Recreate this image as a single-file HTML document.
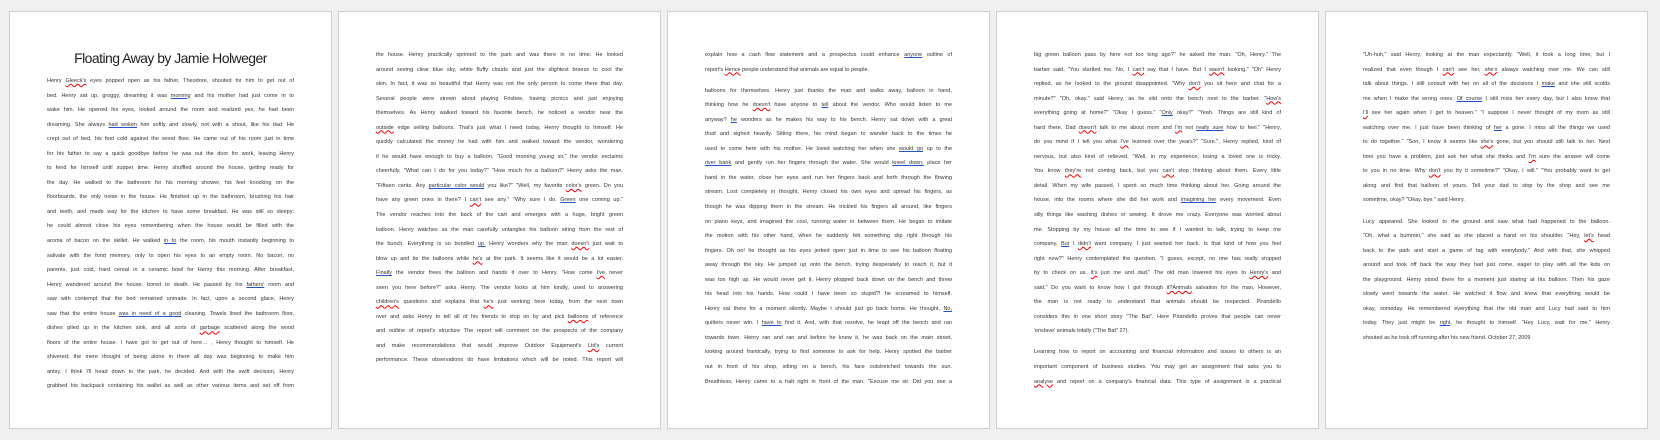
<!DOCTYPE html>
<html><head><meta charset="utf-8"><style>
html,body{margin:0;padding:0;background:#efefef;width:1660px;height:440px;overflow:hidden}
.pg{position:absolute;top:11px;width:321px;height:416px;background:#fff;border:1px solid #cfcfcf}
.tx{position:absolute;left:37px;top:36px;width:247px;font-family:"Liberation Sans",Arial,sans-serif;font-size:5.5px;color:#333}
.l{height:14.55px;line-height:14.55px;overflow:hidden;text-align:justify;text-align-last:justify}
.e{text-align-last:left}
.gap{height:6.5px}
.t{position:absolute;left:0;width:100%;top:36px;text-align:center;font-family:"Liberation Sans",Arial,sans-serif;font-size:14px;letter-spacing:-0.55px;color:#222;line-height:20px}
.r{text-decoration:underline wavy #e00;text-decoration-thickness:0.6px}
.b{text-decoration:underline #2255cc;text-decoration-thickness:0.8px}
</style></head><body>

<div class="pg" style="left:9px">
<div class="t">Floating Away by Jamie Holweger</div>
<div class="tx" style="top:62px">
<div class="l">Henry <span class="r">Gleeck's</span> eyes popped open as his father, Theodore, shouted for him to get out of</div>
<div class="l">bed. Henry sat up, groggy, dreaming it was <span class="b">morning</span> and his mother had just come in to</div>
<div class="l">wake him. He opened his eyes, looked around the room and realized yes, he had been</div>
<div class="l">dreaming. She always <span class="b">had woken</span> him softly and slowly, not with a shout, like his dad. He</div>
<div class="l">crept out of bed, his feet cold against the wood floor. He came out of his room just in time</div>
<div class="l">for his father to say a quick goodbye before he was out the door for work, leaving Henry</div>
<div class="l">to fend for himself until supper time. Henry shuffled around the house, getting ready for</div>
<div class="l">the day. He walked to the bathroom for his morning shower, his feet knocking on the</div>
<div class="l">floorboards, the only noise in the house. He finished up in the bathroom, brushing his hair</div>
<div class="l">and teeth, and made way for the kitchen to have some breakfast. He was still so sleepy;</div>
<div class="l">he could almost close his eyes remembering when the house would be filled with the</div>
<div class="l">aroma of bacon on the skillet. He walked <span class="b">in to</span> the room, his mouth instantly beginning to</div>
<div class="l">salivate with the fond memory, only to open his eyes to an empty room. No bacon, no</div>
<div class="l">parents, just cold, hard cereal in a ceramic bowl for Henry this morning. After breakfast,</div>
<div class="l">Henry wandered around the house, bored to death. He passed by his <span class="b">fathers'</span> room and</div>
<div class="l">saw with contempt that the bed remained unmade. In fact, upon a second glace, Henry</div>
<div class="l">saw that the entire house <span class="b">was in need of a good</span> cleaning. Towels lined the bathroom floor,</div>
<div class="l">dishes piled up in the kitchen sink, and all sorts of <span class="r">garbage</span> scattered along the wood</div>
<div class="l">floors of the entire house. I have got to get out of here… , Henry thought to himself. He</div>
<div class="l">shivered; the mere thought of being alone in there all day was beginning to make him</div>
<div class="l">antsy. I think I'll head down to the park, he decided. And with the swift decision, Henry</div>
<div class="l">grabbed his backpack containing his wallet as well as other various items and set off from</div>
</div></div>

<div class="pg" style="left:338px"><div class="tx">
<div class="l">the house. Henry practically sprinted to the park and was there in no time. He looked</div>
<div class="l">around seeing clear blue sky, white fluffy clouds and just the slightest breeze to cool the</div>
<div class="l">skin. In fact, it was so beautiful that Henry was not the only person to come there that day.</div>
<div class="l">Several people were strewn about playing Frisbee, having picnics and just enjoying</div>
<div class="l">themselves. As Henry walked toward his favorite bench, he noticed a vendor near the</div>
<div class="l"><span class="r">outside</span> edge selling balloons. That's just what I need today, Henry thought to himself. He</div>
<div class="l">quickly calculated the money he had with him and walked toward the vendor, wondering</div>
<div class="l">if he would have enough to buy a balloon. "Good morning young sir," the vendor exclaims</div>
<div class="l">cheerfully, "What can I do for you today?" "How much for a balloon?" Henry asks the man.</div>
<div class="l">"Fifteen cents. Any <span class="b">particular color would</span> you like?" "Well, my favorite <span class="r">color's</span> green. Do you</div>
<div class="l">have any green ones in there? I <span class="r">can't</span> see any." "Why sure I do. <span class="b">Green</span> one coming up."</div>
<div class="l">The vendor reaches into the back of the cart and emerges with a huge, bright green</div>
<div class="l">balloon. Henry watches as the man carefully untangles his balloon string from the rest of</div>
<div class="l">the bunch. Everything is so bundled <span class="b">up.</span> Henry wonders why the man <span class="r">doesn't</span> just wait to</div>
<div class="l">blow up and tie the balloons while <span class="r">he's</span> at the park. It seems like it would be a lot easier.</div>
<div class="l"><span class="b">Finally</span> the vendor frees the balloon and hands it over to Henry. "How come <span class="r">I've</span> never</div>
<div class="l">seen you here before?" asks Henry. The vendor looks at him kindly, used to answering</div>
<div class="l"><span class="r">children's</span> questions and explains that <span class="r">he's</span> just working here today, from the next town</div>
<div class="l">over and asks Henry to tell all of his friends to stop on by and pick <span class="r">balloons</span> of reference</div>
<div class="l">and outline of report's structure The report will comment on the prospects of the company</div>
<div class="l">and make recommendations that would improve Outdoor Equipment's <span class="r">Ltd's</span> current</div>
<div class="l">performance. These observations do have limitations which will be noted. This report will</div>
</div></div>

<div class="pg" style="left:667px"><div class="tx">
<div class="l">explain how a cash flow statement and a prospectus could enhance <span class="b">anyone</span> outline of</div>
<div class="l e">report's <span class="r">Hence</span> people understand that animals are equal to people.</div>
<div class="gap"></div>
<div class="l">balloons for themselves. Henry just thanks the man and walks away, balloon in hand,</div>
<div class="l">thinking how he <span class="r">doesn't</span> have anyone to <span class="b">tell</span> about the vendor. Who would listen to me</div>
<div class="l">anyway? <span class="b">he</span> wonders as he makes his way to his bench. Henry sat down with a great</div>
<div class="l">thud and sighed heavily. Sitting there, his mind began to wander back to the times he</div>
<div class="l">used to come here with his mother. He loved watching her when she <span class="b">would go</span> up to the</div>
<div class="l"><span class="b">river bank</span> and gently run her fingers through the water. She would <span class="b">kneel down,</span> place her</div>
<div class="l">hand in the water, close her eyes and run her fingers back and forth through the flowing</div>
<div class="l">stream. Lost completely in thought, Henry closed his own eyes and spread his fingers, as</div>
<div class="l">though he was dipping them in the stream. He trickled his fingers all around, like fingers</div>
<div class="l">on piano keys, and imagined the cool, running water in between them. He began to imitate</div>
<div class="l">the motion with his other hand, when he suddenly felt something slip right through his</div>
<div class="l">fingers. Oh no! he thought as his eyes jerked open just in time to see his balloon floating</div>
<div class="l">away through the sky. He jumped up onto the bench, trying desperately to reach it, but it</div>
<div class="l">was too high up. He would never get it. Henry plopped back down on the bench and threw</div>
<div class="l">his head into his hands. How could I have been so stupid?! he screamed to himself.</div>
<div class="l">Henry sat there for a moment silently. Maybe I should just go back home. He thought, <span class="b">No,</span></div>
<div class="l">quitters never win. I <span class="b">have to</span> find it. And, with that resolve, he leapt off the bench and ran</div>
<div class="l">towards town. Henry ran and ran and before he knew it, he was back on the main street,</div>
<div class="l">looking around frantically, trying to find someone to ask for help. Henry spotted the barber</div>
<div class="l">out in front of his shop, sitting on a bench, his face outstretched towards the sun.</div>
<div class="l">Breathless, Henry came to a halt right in front of the man. "Excuse me sir. Did you see a</div>
</div></div>

<div class="pg" style="left:996px"><div class="tx">
<div class="l">big green balloon pass by here not too long ago?" he asked the man. "Oh, Henry." The</div>
<div class="l">barber said, "You startled me. No, I <span class="r">can't</span> say that I have. But I <span class="r">wasn't</span> looking." "Oh" Henry</div>
<div class="l">replied, as he looked to the ground disappointed. "Why <span class="r">don't</span> you sit here and chat for a</div>
<div class="l">minute?" "Oh, okay." said Henry, as he slid onto the bench next to the barber. "<span class="r">How's</span></div>
<div class="l">everything going at home?" "Okay I guess." "<span class="b">Only</span> okay?" "Yeah. Things are still kind of</div>
<div class="l">hard there. Dad <span class="r">doesn't</span> talk to me about mom and <span class="r">I'm</span> not <span class="b">really sure</span> how to feel." "Henry,</div>
<div class="l">do you mind if I tell you what <span class="r">I've</span> learned over the years?" "Sure.", Henry replied, kind of</div>
<div class="l">nervous, but also kind of relieved. "Well, in my experience, losing a loved one is tricky.</div>
<div class="l">You know <span class="r">they're</span> not coming back, but you <span class="r">can't</span> stop thinking about them. Every little</div>
<div class="l">detail. When my wife passed, I spent so much time thinking about her. Going around the</div>
<div class="l">house, into the rooms where she did her work and <span class="b">imagining her</span> every movement. Even</div>
<div class="l">silly things like washing dishes or sewing. It drove me crazy. Everyone was worried about</div>
<div class="l">me. Stopping by my house all the time to see if I wanted to talk, trying to keep me</div>
<div class="l">company. <span class="b">But</span> I <span class="r">didn't</span> want company. I just wanted her back. Is that kind of how you feel</div>
<div class="l">right now?" Henry contemplated the question. "I guess, except, no one has really stopped</div>
<div class="l">by to check on us. <span class="r">It's</span> just me and dad." The old man lowered his eyes to <span class="r">Henry's</span> and</div>
<div class="l">said," Do you want to know how I got through <span class="r">it?Animals</span> salvation for the man. However,</div>
<div class="l">the man is not ready to understand that animals should be respected. Pirandello</div>
<div class="l">considers this in one short story "The Bat". Here Pirandello proves that people can never</div>
<div class="l e">'enslave' animals totally ("The Bat" 27).</div>
<div class="gap"></div>
<div class="l">Learning how to report on accounting and financial information and issues to others is an</div>
<div class="l">important component of business studies. You may get an assignment that asks you to</div>
<div class="l"><span class="r">analyse</span> and report on a company's financial data. This type of assignment is a practical</div>
</div></div>

<div class="pg" style="left:1325px"><div class="tx">
<div class="l">"Uh-huh," said Henry, looking at the man expectantly. "Well, it took a long time, but I</div>
<div class="l">realized that even though I <span class="r">can't</span> see her, <span class="r">she's</span> always watching over me. We can still</div>
<div class="l">talk about things. I still consult with her on all of the decisions I <span class="b">make</span> and she still scolds</div>
<div class="l">me when I make the wrong ones. <span class="b">Of course</span> I still miss her every day, but I also know that</div>
<div class="l"><span class="r">I'll</span> see her again when I get to heaven." "I suppose I never thought of my mom as still</div>
<div class="l">watching over me. I just have been thinking of <span class="b">her</span> a gone. I miss all the things we used</div>
<div class="l">to do together." "Son, I know it seems like <span class="r">she's</span> gone, but you should still talk to her. Next</div>
<div class="l">time you have a problem, just ask her what she thinks and <span class="r">I'm</span> sure the answer will come</div>
<div class="l">to you in no time. Why <span class="r">don't</span> you try it sometime?" "Okay, I will." "You probably want to get</div>
<div class="l">along and find that balloon of yours. Tell your dad to stop by the shop and see me</div>
<div class="l e">sometime, okay? "Okay, bye." said Henry.</div>
<div class="gap"></div>
<div class="l">Lucy appeared. She looked to the ground and saw what had happened to the balloon.</div>
<div class="l">"Oh, what a bummer," she said as she placed a hand on his shoulder. "Hey, <span class="r">let's</span> head</div>
<div class="l">back to the park and start a game of tag with everybody." And with that, she whipped</div>
<div class="l">around and took off back the way they had just come, eager to play with all the kids on</div>
<div class="l">the playground. Henry stood there for a moment just staring at his balloon. Then his gaze</div>
<div class="l">slowly went towards the water. He watched it flow and knew that everything would be</div>
<div class="l">okay, someday. He remembered everything that the old man and Lucy had said to him</div>
<div class="l">today. They just might be <span class="b">right</span>, he thought to himself. "Hey Lucy, wait for me." Henry</div>
<div class="l e">shouted as he took off running after his new friend. October 27, 2009</div>
</div></div>

</body></html>
